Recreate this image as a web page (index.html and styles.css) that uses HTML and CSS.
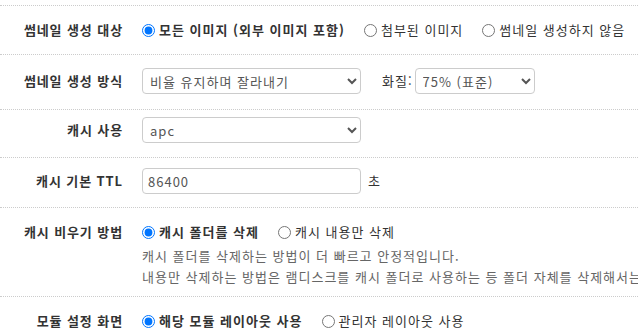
FILE: index.html
```html
<!DOCTYPE html>
<html lang="ko">
<head>
<meta charset="utf-8">
<link rel="stylesheet" href="styles.css">
</head>
<body>
<div class="form">
  <div class="row r1">
    <div class="label">썸네일 생성 대상</div>
    <div class="ctl">
      <label class="opt sel"><input type="radio" name="t" checked>모든 이미지 (외부 이미지 포함)</label>
      <label class="opt"><input type="radio" name="t">첨부된 이미지</label>
      <label class="opt"><input type="radio" name="t">썸네일 생성하지 않음</label>
    </div>
  </div>
  <div class="row r2">
    <div class="label">썸네일 생성 방식</div>
    <div class="ctl">
      <select class="sel-wide"><option>비율 유지하며 잘라내기</option></select>
      <span class="q">화질:</span>
      <select class="sel-small"><option>75% (표준)</option></select>
    </div>
  </div>
  <div class="row r3">
    <div class="label">캐시 사용</div>
    <div class="ctl">
      <select class="sel-wide"><option>apc</option></select>
    </div>
  </div>
  <div class="row r4">
    <div class="label">캐시 기본 TTL</div>
    <div class="ctl">
      <input class="txt" type="text" value="86400"><span class="unit">초</span>
    </div>
  </div>
  <div class="row r5">
    <div class="label">캐시 비우기 방법</div>
    <div class="ctl col">
      <div class="opts">
        <label class="opt sel"><input type="radio" name="c" checked>캐시 폴더를 삭제</label>
        <label class="opt"><input type="radio" name="c">캐시 내용만 삭제</label>
      </div>
      <p class="help">캐시 폴더를 삭제하는 방법이 더 빠르고 안정적입니다.<br>내용만 삭제하는 방법은 램디스크를 캐시 폴더로 사용하는 등 폴더 자체를 삭제해서는 안 되는 경우에 유용합니다.</p>
    </div>
  </div>
  <div class="row r6">
    <div class="label">모듈 설정 화면</div>
    <div class="ctl">
      <label class="opt sel"><input type="radio" name="m" checked>해당 모듈 레이아웃 사용</label>
      <label class="opt"><input type="radio" name="m">관리자 레이아웃 사용</label>
    </div>
  </div>
</div>
</body>
</html>
```
FILE: styles.css
```css
html, body {
  margin: 0;
  padding: 0;
  background: #fff;
  overflow: hidden;
}
body {
  font-family: "Noto Sans CJK KR", "Noto Sans", sans-serif;
  font-size: 13px;
  color: #333;
  line-height: 20px;
  padding-top: 5px;
}
.form {
  border-top: 1px dotted #ccc;
}
.row {
  display: flex;
  align-items: flex-start;
  border-bottom: 1px dotted #ccc;
  white-space: nowrap;
}
.label {
  width: 123px;
  flex: none;
  text-align: right;
  font-weight: bold;
  color: #333;
  letter-spacing: 0.9px;
}
.ctl {
  padding-left: 19px;
  display: flex;
  align-items: center;
  letter-spacing: 1px;
}
.col {
  flex-direction: column;
  align-items: flex-start;
}
.opts {
  display: flex;
  align-items: center;
}
.opt {
  display: inline-flex;
  align-items: center;
  margin-right: 19px;
  color: #333;
}
.opt.sel {
  font-weight: bold;
}
.opt input {
  margin: 0 4px 0 0;
  width: 13px;
  height: 13px;
}
.r1 { padding: 14px 0 14px; }
.r2 { padding: 13px 0 15px; }
.r2 .label { line-height: 26px; }
.r3 { padding: 7px 0 14px; }
.r3 .label { line-height: 26px; }
.r4 { padding: 10px 0 13px; }
.r4 .label { line-height: 26px; }
.r5 { padding: 14px 0 9px; }
.r6 { padding: 14px 0 14px; }
select, .txt {
  font-family: "Noto Sans CJK KR", "Noto Sans", sans-serif;
  font-size: 13px;
  letter-spacing: 1px;
  color: #555;
  height: 26px;
  border: 1px solid #ccc;
  border-radius: 4px;
  background: #fff;
  box-sizing: border-box;
  margin: 0;
}
.sel-wide {
  width: 219px;
  padding: 0 3px;
}
.sel-small {
  width: 120px;
  padding: 0 3px;
}
.q {
  margin-left: 21px;
  margin-right: 2px;
  color: #333;
}
.txt {
  width: 219px;
  padding: 0 5px;
}
.unit {
  margin-left: 7px;
  color: #333;
}
.help {
  margin: 3px 0 0;
  color: #666;
  line-height: 21px;
}
```
